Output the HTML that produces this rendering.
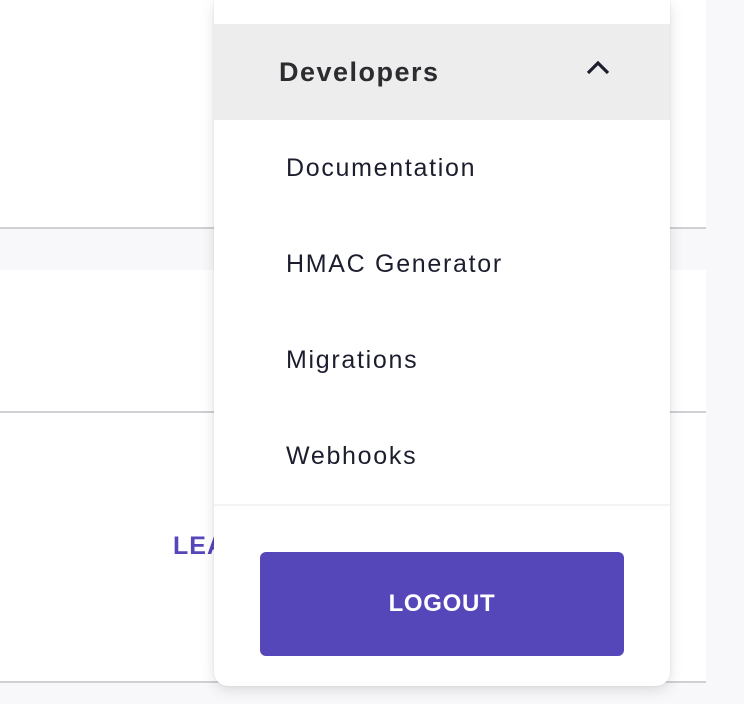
<!DOCTYPE html>
<html><head><meta charset="utf-8"><style>
*{margin:0;padding:0;box-sizing:border-box}
body{width:744px;height:704px;overflow:hidden;background:#f8f8fa;font-family:"Liberation Sans",sans-serif;position:relative}
.card{position:absolute;left:0;width:706px;background:#fff}
.menu{position:absolute;left:214px;top:0;width:456px;height:686px;background:#fff;border-radius:0 0 14px 14px;box-shadow:0 4px 14px rgba(0,0,0,0.12),0 0 2px rgba(0,0,0,0.08)}
.hdr{position:absolute;top:24px;left:0;width:456px;height:96px;background:#ededed}
.hdr span{position:absolute;left:65px;top:33px;font-size:27px;font-weight:bold;color:#2b2b30;letter-spacing:1.5px}
.item{position:absolute;left:72px;font-size:25px;color:#1c1e2e;letter-spacing:1.7px}
.btn{position:absolute;left:46px;top:552px;width:364px;height:104px;background:#5546b9;border-radius:6px;color:#fff;font-size:24px;font-weight:bold;text-align:center;line-height:104px;letter-spacing:0.7px}
</style></head><body>
<div class="card" style="top:0;height:229px;border-bottom:2px solid #cfd0d4"></div>
<div class="card" style="top:270px;height:143px;border-bottom:2px solid #cfd0d4"></div>
<div class="card" style="top:413px;height:270px;border-bottom:2px solid #cfd0d4"></div>
<div style="position:absolute;left:173px;top:532px;font-size:25px;font-weight:bold;color:#5546b9;letter-spacing:1px">LEARN</div>
<div class="menu">
<div class="hdr"><span>Developers</span>
<svg style="position:absolute;left:372px;top:34px" width="24" height="18" viewBox="0 0 24 18"><path d="M2 15 L12 5 L22 15" fill="none" stroke="#1c1e2e" stroke-width="3.2"/></svg></div>
<div class="item" style="top:154px">Documentation</div>
<div class="item" style="top:250px">HMAC Generator</div>
<div class="item" style="top:346px">Migrations</div>
<div class="item" style="top:442px">Webhooks</div>
<div style="position:absolute;left:0;top:504px;width:456px;height:2px;background:#f4f4f6"></div>
<div class="btn">LOGOUT</div>
</div>
</body></html>
